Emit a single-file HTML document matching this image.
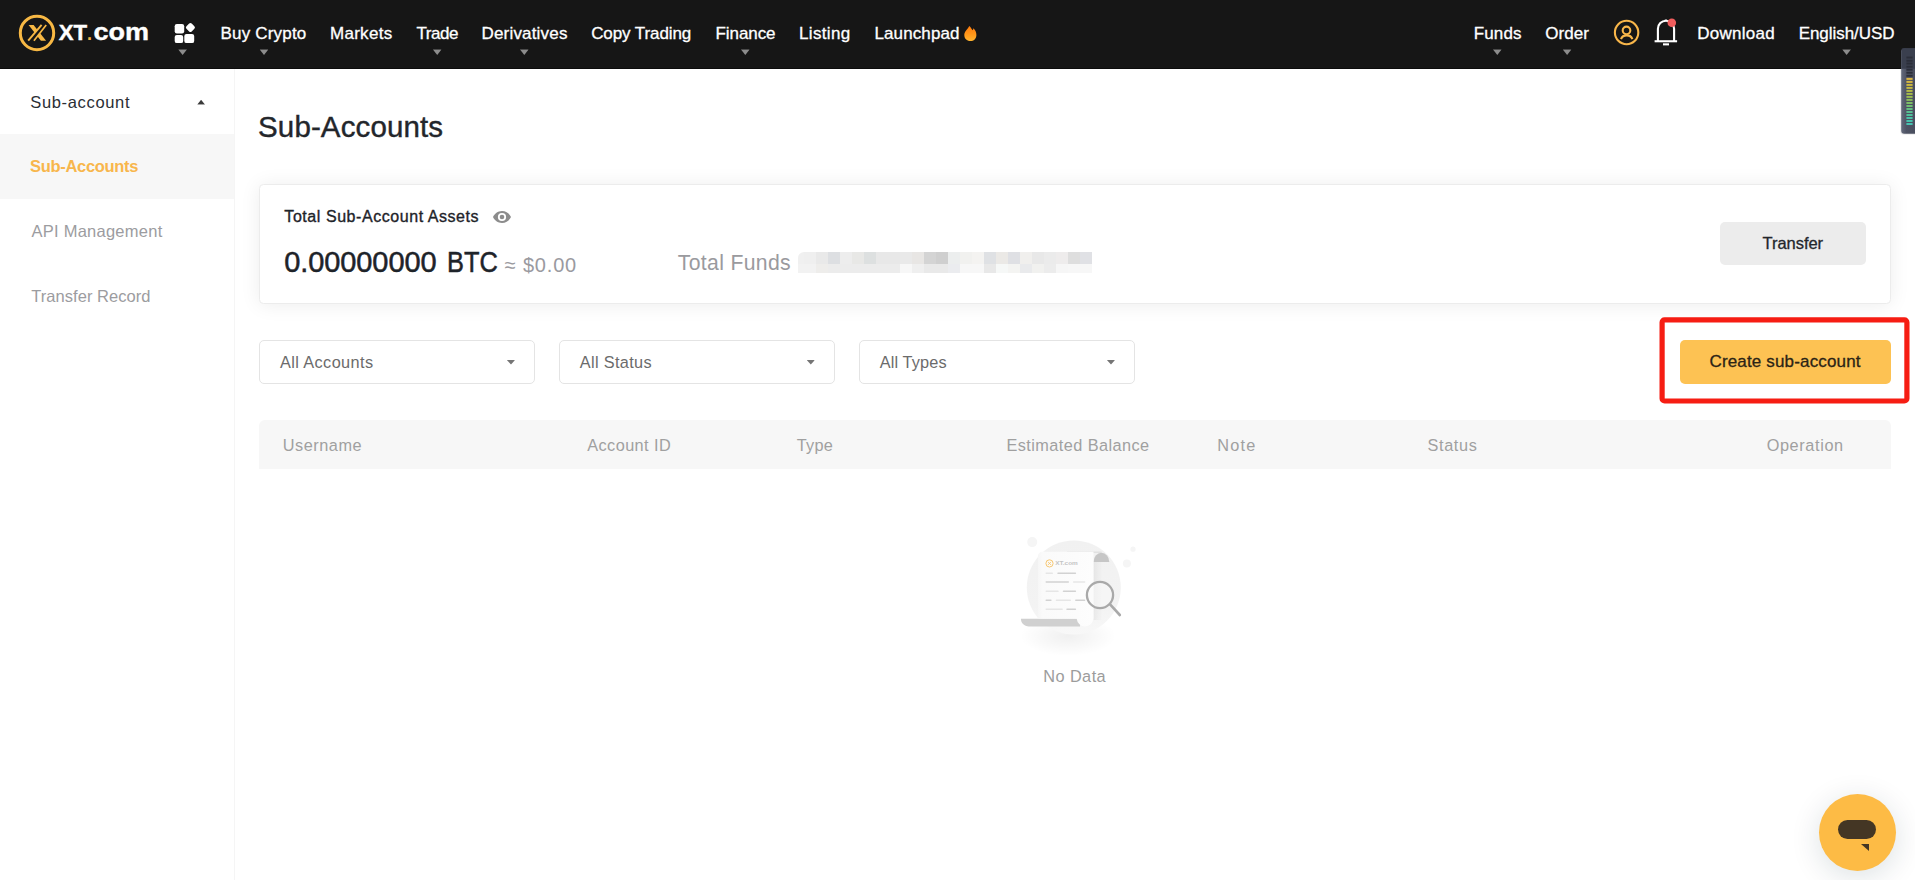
<!DOCTYPE html>
<html lang="en">
<head>
<meta charset="utf-8">
<title>Sub-Accounts</title>
<style>
*{box-sizing:border-box;margin:0;padding:0}
html,body{width:1915px;height:880px;overflow:hidden;background:#fff}
body{font-family:"Liberation Sans",sans-serif;color:#1e2329;position:relative}
.abs{position:absolute;white-space:nowrap}
#nav{position:absolute;left:0;top:0;width:1915px;height:68px;background:#161616}
#navline{position:absolute;left:0;top:68px;width:1915px;height:1px;background:#0c0c0c}
.ni{position:absolute;top:23px;height:22px;line-height:22px;font-size:17px;color:#fff;white-space:nowrap;-webkit-text-stroke:0.3px #fff}
.car{position:absolute;left:0;top:0;width:9px;height:5.800px;background:#8c8c8c;clip-path:polygon(0 0,100% 0,50% 100%)}
#side{position:absolute;left:0;top:69px;width:235px;height:812px;border-right:1px solid #f5f5f5;background:#fff}
.si{position:absolute;left:31px;font-size:16.500px;height:20px;line-height:20px;color:#9c9ca0;white-space:nowrap}
.sel{top:340px;width:275.600px;height:43.600px;border:1px solid #e4e4e4;border-radius:5px;background:#fff}
.selt{top:351px;font-size:16.300px;line-height:22px;color:#6b6b6b}
.scar{position:absolute;left:0;top:0;width:8.400px;height:4.700px;background:#757575;clip-path:polygon(0 0,100% 0,50% 100%)}
.th{top:434px;font-size:16.300px;line-height:22px;color:#a0a0a0}
</style>
</head>
<body>
<div id="nav">
  <svg class="abs" style="left:0;top:0" width="160" height="68" viewBox="0 0 160 68">
    <circle cx="37" cy="32.950" r="16.700" fill="none" stroke="#f7b844" stroke-width="3"/>
    <polygon points="28.600,24.900 33.600,24.900 46.100,40.700 40.900,40.700" fill="#f7b844"/>
    <polygon points="41.600,24.900 46.200,24.900 33.900,40.700 28.200,40.700" fill="#161616"/>
    <line x1="41.600" y1="24.900" x2="28.200" y2="40.700" stroke="#f7b844" stroke-width="1.900"/>
    <line x1="46.200" y1="24.900" x2="33.900" y2="40.700" stroke="#f7b844" stroke-width="1.700"/>
    <text y="40.300" font-family="Liberation Sans, sans-serif" font-weight="700" fill="#fff" stroke="#fff" stroke-width="0.400"><tspan x="58.800" font-size="21.400" textLength="28.400" lengthAdjust="spacingAndGlyphs">XT</tspan><tspan x="87" font-size="18" fill="#f6b744" stroke="none">.</tspan><tspan x="93.500" font-size="24.800" textLength="55.600" lengthAdjust="spacingAndGlyphs">com</tspan></text>
  </svg>
  <svg class="abs" style="left:170px;top:18px" width="30" height="30" viewBox="170 18 30 30">
    <rect x="174.700" y="24" width="9.500" height="9.400" rx="2.200" fill="#fff"/>
    <rect x="174.700" y="34.900" width="8.500" height="8.200" rx="2.200" fill="#fff"/>
    <rect x="184.300" y="33.900" width="9.900" height="9.200" rx="2.200" fill="#fff"/>
    <rect x="186.700" y="23.800" width="7.400" height="7.400" rx="1.800" fill="#fff" transform="rotate(45 190.400 27.500)"/>
  </svg>
  <div class="car" style="transform:translate(178.1px,49.200px)"></div>
  <div class="ni" id="n1" style=";left:220.51px;letter-spacing:0.192px">Buy Crypto</div><div class="car" style="transform:translate(259.5px,49.200px)"></div>
  <div class="ni" id="n2" style=";left:330.00px;letter-spacing:0.282px">Markets</div>
  <div class="ni" id="n3" style=";left:416.40px;letter-spacing:-0.404px">Trade</div><div class="car" style="transform:translate(432.7px,49.200px)"></div>
  <div class="ni" id="n4" style=";left:481.51px;letter-spacing:0.181px">Derivatives</div><div class="car" style="transform:translate(519.8px,49.200px)"></div>
  <div class="ni" id="n5" style=";left:591.13px;letter-spacing:-0.089px">Copy Trading</div>
  <div class="ni" id="n6" style=";left:715.51px;letter-spacing:-0.075px">Finance</div><div class="car" style="transform:translate(740.8px,49.200px)"></div>
  <div class="ni" id="n7" style=";left:799.00px;letter-spacing:0.341px">Listing</div>
  <div class="ni" id="n8" style=";left:874.51px;letter-spacing:0.101px">Launchpad</div>
  <svg class="abs" style="left:962px;top:24px" width="17" height="19" viewBox="0 0 17 19">
    <defs><linearGradient id="fl" x1="0" y1="0" x2="0" y2="1"><stop offset="0" stop-color="#ff7a0c"/><stop offset="0.500" stop-color="#ff9418"/><stop offset="1" stop-color="#ffb42e"/></linearGradient></defs>
    <path d="M7.300 1.900c1.500 1.500 2.500 2.800 3.100 4.400 0.500-0.500 0.900-1.200 1.100-2.100 1.800 1.800 2.900 4.200 2.900 6.700 0 3.500-2.600 6.200-6.100 6.200s-6-2.700-6-6.100c0-3.600 3.100-5.500 5-9.100z" fill="url(#fl)"/>
  </svg>
  <div class="ni" id="n9" style=";left:1473.76px;letter-spacing:0.124px">Funds</div><div class="car" style="transform:translate(1492.8px,49.200px)"></div>
  <div class="ni" id="n10" style=";left:1545.19px;letter-spacing:0.054px">Order</div><div class="car" style="transform:translate(1562.6px,49.200px)"></div>
  <svg class="abs" style="left:1610px;top:15px" width="72" height="36" viewBox="1610 15 72 36">
    <g fill="none" stroke="#f8b64a" stroke-width="2.100">
      <circle cx="1626.600" cy="32.500" r="11.700"/>
      <circle cx="1626.500" cy="30.400" r="3.800"/>
      <path d="M1621 39.200a6 5.500 0 0 1 11.400 0"/>
    </g>
    <g fill="none" stroke="#fff" stroke-width="2.100">
      <path d="M1657.900 41.200V28.800a8.100 8.100 0 0 1 16.200 0V41.200"/>
      <path d="M1654.600 41.250H1677.100"/>
      <path d="M1663 44.350H1669"/>
      <path d="M1665.900 19.600v1.500" stroke-width="2.400"/>
    </g>
    <circle cx="1671.800" cy="22.700" r="4.300" fill="#f05d5d"/>
  </svg>
  <div class="ni" id="n11" style=";left:1697.16px;letter-spacing:0.280px">Download</div>
  <div class="ni" id="n12" style=";left:1798.66px;letter-spacing:-0.042px">English/USD</div><div class="car" style="transform:translate(1842.1px,49.200px)"></div>
</div>
<div id="navline"></div>
<div id="side">
  <div class="si" style="top:23px;color:#2a2e34;left:30.23px;letter-spacing:0.665px" id="s0">Sub-account</div>
  <div class="abs" style="left:0;top:0;width:8px;height:5px;background:#3a3a3a;clip-path:polygon(50% 0,100% 100%,0 100%);transform:translate(197.100px,30.800px)"></div>
  <div class="abs" style="left:0;top:65px;width:234.300px;height:65px;background:#f7f7f7"></div>
  <div class="si" style="top:87px;color:#f8b64c;font-weight:700;left:30.12px;letter-spacing:-0.315px" id="s1">Sub-Accounts</div>
  <div class="si" style="top:152px;left:31.44px;letter-spacing:0.256px" id="s2">API Management</div>
  <div class="si" style="top:217px;left:31.21px;letter-spacing:0.053px" id="s3">Transfer Record</div>
</div>
<div id="main">
  <div class="abs" id="title" style="top:108px;font-size:29.500px;line-height:38px;color:#23262b;-webkit-text-stroke:0.400px #23262b;left:258.07px;letter-spacing:0.118px">Sub-Accounts</div>
  <div class="abs" id="card" style="left:259px;top:184px;width:1632px;height:120px;border:1px solid #ececec;border-radius:4.500px;background:#fff;box-shadow:0 1px 20px rgba(0,0,0,0.075)"></div>
  <div class="abs" id="c1" style="top:207px;font-size:16px;line-height:20px;color:#1e2329;-webkit-text-stroke:0.350px #1e2329;left:284.37px;letter-spacing:0.555px">Total Sub-Account Assets</div>
  <svg class="abs" style="left:492px;top:210px" width="20" height="14" viewBox="0 0 20 14">
    <path d="M10 1C5.800 1 2.400 3.800 1 7c1.400 3.200 4.800 6 9 6s7.600-2.800 9-6C17.600 3.800 14.200 1 10 1z" fill="#8c8c8c"/>
    <circle cx="10" cy="7" r="4.100" fill="#fff"/>
    <circle cx="10" cy="7" r="2.300" fill="#8c8c8c"/>
  </svg>
  <div class="abs" id="c2" style="top:244px;font-size:29px;line-height:36px;color:#1e2329;-webkit-text-stroke:0.500px #1e2329;left:284.30px;letter-spacing:-0.104px">0.00000000</div>
  <div class="abs" id="c2b" style="top:244px;font-size:29px;line-height:36px;color:#1e2329;-webkit-text-stroke:0.500px #1e2329;left:447.200px;letter-spacing:0px;transform:scaleX(0.876);transform-origin:0 0">BTC</div>
  <div class="abs" id="c3" style="top:250px;font-size:20px;line-height:30px;color:#9a9aa0;left:504.76px;letter-spacing:0.810px">≈ $0.00</div>
  <div class="abs" id="c4" style="top:248px;font-size:21.200px;line-height:30px;color:#9a9a9e;left:677.76px;letter-spacing:0.334px">Total Funds</div>
  <svg class="abs" id="blur" style="left:798px;top:252px" width="294" height="21" viewBox="798 252 294 21" shape-rendering="crispEdges"><defs><clipPath id="bc"><path d="M798 273V258a6 6 0 0 1 6-6H1092V273z"/></clipPath></defs><g clip-path="url(#bc)"><rect x="798" y="252" width="6" height="12" fill="#f0f0f0"/><rect x="798" y="264" width="6" height="8.600" fill="#f2f2f2"/><rect x="804" y="252" width="12" height="12" fill="#efefef"/><rect x="804" y="264" width="12" height="8.600" fill="#f2f2f2"/><rect x="816" y="252" width="12" height="12" fill="#e9e9e9"/><rect x="816" y="264" width="12" height="8.600" fill="#eeedeb"/><rect x="828" y="252" width="12" height="12" fill="#dddfe2"/><rect x="828" y="264" width="12" height="8.600" fill="#ececec"/><rect x="840" y="252" width="12" height="12" fill="#ededed"/><rect x="840" y="264" width="12" height="8.600" fill="#ececec"/><rect x="852" y="252" width="12" height="12" fill="#e8e8e6"/><rect x="852" y="264" width="12" height="8.600" fill="#ececec"/><rect x="864" y="252" width="12" height="12" fill="#dde0e0"/><rect x="864" y="264" width="12" height="8.600" fill="#ececec"/><rect x="876" y="252" width="12" height="12" fill="#e8e8e8"/><rect x="876" y="264" width="12" height="8.600" fill="#ececec"/><rect x="888" y="252" width="12" height="12" fill="#e8e8e8"/><rect x="888" y="264" width="12" height="8.600" fill="#ececec"/><rect x="900" y="252" width="12" height="12" fill="#e9e9e9"/><rect x="900" y="264" width="12" height="8.600" fill="#f7f7f7"/><rect x="912" y="252" width="12" height="12" fill="#e8e6e4"/><rect x="912" y="264" width="12" height="8.600" fill="#efefef"/><rect x="924" y="252" width="12" height="12" fill="#d4d4d4"/><rect x="924" y="264" width="12" height="8.600" fill="#e9e9e9"/><rect x="936" y="252" width="12" height="12" fill="#cfcfcf"/><rect x="936" y="264" width="12" height="8.600" fill="#e9e9e9"/><rect x="948" y="252" width="12" height="12" fill="#eceeee"/><rect x="948" y="264" width="12" height="8.600" fill="#ebecef"/><rect x="960" y="252" width="12" height="12" fill="#f1f1ef"/><rect x="960" y="264" width="12" height="8.600" fill="#f7f7f7"/><rect x="972" y="252" width="12" height="12" fill="#f4f3f1"/><rect x="972" y="264" width="12" height="8.600" fill="#f7f7f7"/><rect x="984" y="252" width="12" height="12" fill="#dfe1e4"/><rect x="984" y="264" width="12" height="8.600" fill="#e8e8e8"/><rect x="996" y="252" width="12" height="12" fill="#ebe9e6"/><rect x="996" y="264" width="12" height="8.600" fill="#f6f8f7"/><rect x="1008" y="252" width="12" height="12" fill="#dfe0e4"/><rect x="1008" y="264" width="12" height="8.600" fill="#f4f4f2"/><rect x="1020" y="252" width="12" height="12" fill="#f0efed"/><rect x="1020" y="264" width="12" height="8.600" fill="#e9eaec"/><rect x="1032" y="252" width="12" height="12" fill="#e8e8e8"/><rect x="1032" y="264" width="12" height="8.600" fill="#f1f1ef"/><rect x="1044" y="252" width="12" height="12" fill="#ebebeb"/><rect x="1044" y="264" width="12" height="8.600" fill="#ececec"/><rect x="1056" y="252" width="12" height="12" fill="#eeecec"/><rect x="1056" y="264" width="12" height="8.600" fill="#f6f6f6"/><rect x="1068" y="252" width="12" height="12" fill="#dedede"/><rect x="1068" y="264" width="12" height="8.600" fill="#f7f7f7"/><rect x="1080" y="252" width="12" height="12" fill="#e0e1e5"/><rect x="1080" y="264" width="12" height="8.600" fill="#f7f7f7"/></g></svg>
  <div class="abs" id="btnT" style="left:1720px;top:222px;width:146px;height:43px;border-radius:5px;background:#ececec"></div>
  <div class="abs" id="btnTt" style="top:232px;font-size:16.500px;line-height:22px;color:#23262b;-webkit-text-stroke:0.300px #23262b;left:1762.50px;letter-spacing:-0.034px">Transfer</div>

  <div class="abs sel" style="left:259px"></div><div class="abs selt" id="f1" style=";left:280.00px;letter-spacing:0.398px">All Accounts</div><div class="scar" style="transform:translate(506.8px,359.900px)"></div>
  <div class="abs sel" style="left:559.200px"></div><div class="abs selt" id="f2" style=";left:579.75px;letter-spacing:0.340px">All Status</div><div class="scar" style="transform:translate(806.6px,359.900px)"></div>
  <div class="abs sel" style="left:859px"></div><div class="abs selt" id="f3" style=";left:879.75px;letter-spacing:0.133px">All Types</div><div class="scar" style="transform:translate(1106.8px,359.900px)"></div>

  <div class="abs" id="btnC" style="left:1680px;top:340px;width:211px;height:44px;border-radius:5px;background:#fdc253"></div>
  <div class="abs" id="btnCt" style="top:351px;font-size:17px;line-height:22px;color:#2b2416;-webkit-text-stroke:0.300px #2b2416;left:1709.44px;letter-spacing:0.162px">Create sub-account</div>
  <svg class="abs" id="redbox" style="left:1655px;top:313px" width="260" height="95" viewBox="1655 313 260 95"><rect x="1662.100" y="319.800" width="244.800" height="81.200" rx="2.500" fill="none" stroke="#f61d13" stroke-width="5.200"/></svg>

  <div class="abs" id="thead" style="left:259px;top:420px;width:1632px;height:48.700px;background:#f7f7f7;border-radius:6px 6px 0 0"></div>
  <div class="abs th" id="h1" style=";left:282.68px;letter-spacing:0.541px">Username</div>
  <div class="abs th" id="h2" style=";left:587.27px;letter-spacing:0.417px">Account ID</div>
  <div class="abs th" id="h3" style=";left:796.76px;letter-spacing:0.293px">Type</div>
  <div class="abs th" id="h4" style=";left:1006.53px;letter-spacing:0.425px">Estimated Balance</div>
  <div class="abs th" id="h5" style=";left:1217.14px;letter-spacing:1.299px">Note</div>
  <div class="abs th" id="h6" style=";left:1427.49px;letter-spacing:0.646px">Status</div>
  <div class="abs th" id="h7" style=";left:1766.66px;letter-spacing:0.623px">Operation</div>

<svg class="abs" id="ill" style="left:1000px;top:530px" width="150" height="130" viewBox="1000 530 150 130">
    <defs>
      <linearGradient id="cg" x1="0" y1="0" x2="0" y2="1"><stop offset="0" stop-color="#f1f1f1"/><stop offset="0.700" stop-color="#f3f3f3"/><stop offset="1" stop-color="#f8f8f8"/></linearGradient>
      <radialGradient id="sh" cx="0.500" cy="0.500" r="0.500"><stop offset="0" stop-color="#000" stop-opacity="0.060"/><stop offset="1" stop-color="#000" stop-opacity="0"/></radialGradient>
      <linearGradient id="ps" x1="0" y1="0" x2="1" y2="0"><stop offset="0" stop-color="#000" stop-opacity="0.050"/><stop offset="1" stop-color="#000" stop-opacity="0"/></linearGradient>
      <linearGradient id="pg" x1="0" y1="0" x2="1" y2="0"><stop offset="0" stop-color="#f6f6f6"/><stop offset="0.080" stop-color="#fafafa"/><stop offset="1" stop-color="#fdfdfd"/></linearGradient>
    </defs>
    <ellipse cx="1068" cy="636" rx="48" ry="20" fill="url(#sh)"/>
    <circle cx="1073.800" cy="587.500" r="47" fill="url(#cg)"/>
    <circle cx="1032.200" cy="542.100" r="5" fill="#f5f5f5"/>
    <circle cx="1133" cy="549.200" r="2.600" fill="#f5f5f5"/>
    <circle cx="1126.900" cy="563.400" r="4" fill="#f5f5f5"/>
    <rect x="1093.500" y="562" width="9" height="58" fill="url(#ps)"/>
    <path d="M1093.500 561.900a7.900 9.200 0 0 1 15.800 0z" fill="#c6c6c6"/>
    <path d="M1067 552.200H1101.500" stroke="#d9d9d9" stroke-width="1" fill="none"/>
    <path d="M1020.900 618.800H1080v7.600H1029c-5 0-8.100-3.500-8.100-7.600z" fill="#d0d0d0"/>
    <path d="M1037.900 556.500a4.800 4.800 0 0 1 4.800-4.800H1093.500V618a8.400 8.400 0 0 1-8.400 8.400a8.400 8.400 0 0 1-8.400-7.600H1037.900z" fill="url(#pg)"/>
    <circle cx="1049.500" cy="563.400" r="3.600" fill="none" stroke="#f6c264" stroke-width="0.900"/>
    <path d="M1047.900 561.800l3.200 3.200M1051.100 561.800l-3.200 3.200" stroke="#f6c264" stroke-width="0.800"/>
    <text x="1055.300" y="565.300" font-family="Liberation Sans, sans-serif" font-weight="700" font-size="5.400" fill="#c4c4c4" textLength="22.500" lengthAdjust="spacingAndGlyphs">XT.com</text>
    <g stroke-width="1.500" stroke-linecap="round" fill="none">
      <path d="M1046.200 573.200H1052.300M1046.200 591.200H1058M1056.400 600.200H1070.300M1046.200 609.200H1062.100M1073.700 582H1084.600" stroke="#e6e6e6"/>
      <path d="M1058 573.200H1075.400M1046.200 582H1068.300M1063.500 591.200H1075.400M1046.200 600.200H1050.900M1075.800 600.200H1084.600M1067 609.200H1075.400" stroke="#d2d2d2"/>
    </g>
    <circle cx="1100" cy="595" r="13.100" fill="#fafafa" fill-opacity="0.500" stroke="#a9a9a9" stroke-width="2.300"/>
    <path d="M1110.300 604.600L1119.800 615" stroke="#a9a9a9" stroke-width="2.600" stroke-linecap="round"/>
  </svg>
  <div class="abs" id="nodata" style="top:666px;font-size:16.300px;line-height:20px;color:#9c9c9c;left:1043.21px;letter-spacing:0.456px">No Data</div>
</div>
<svg class="abs" id="wid" style="left:1896px;top:44px" width="19" height="94" viewBox="1896 44 19 94">
  <defs><linearGradient id="wg" x1="0" y1="0" x2="1" y2="0"><stop offset="0" stop-color="#646a7c"/><stop offset="0.250" stop-color="#4e5364"/><stop offset="1" stop-color="#464b5a"/></linearGradient></defs>
  <rect x="1900.300" y="48.700" width="20" height="86" rx="3.500" fill="#000" fill-opacity="0.080"/>
  <rect x="1901.200" y="48.500" width="20" height="85.300" rx="3" fill="url(#wg)"/>
  <rect x="1901.800" y="48.500" width="20" height="20" fill="#3a3f4e"/>
  <path d="M1901.800 68.500V51.500a3 3 0 0 1 3-3H1915V68.500z" fill="#3a3f4e"/>
  <rect x="1906.400" y="56.6" width="6.200" height="1.900" fill="#2b2e39"/><rect x="1906.400" y="59.8" width="6.200" height="1.900" fill="#2b2e39"/><rect x="1906.400" y="62.6" width="6.200" height="1.900" fill="#2b2e39"/><rect x="1906.400" y="65.8" width="6.200" height="1.900" fill="#2b2e39"/><rect x="1906.400" y="68.8" width="6.200" height="1.900" fill="#2b2e39"/><rect x="1906.400" y="71.8" width="6.200" height="1.900" fill="#2b2e39"/><rect x="1906.400" y="74.8" width="6.200" height="1.900" fill="#2b2e39"/><rect x="1906.400" y="77.9" width="6.200" height="2" fill="#d9b441"/><rect x="1906.400" y="80.9" width="6.200" height="2" fill="#d6b640"/><rect x="1906.400" y="83.9" width="6.200" height="2" fill="#cdb83f"/><rect x="1906.400" y="86.9" width="6.200" height="2" fill="#c2b941"/><rect x="1906.400" y="89.9" width="6.200" height="2" fill="#b4ba45"/><rect x="1906.400" y="92.9" width="6.200" height="2" fill="#a6bb4b"/><rect x="1906.400" y="95.9" width="6.200" height="2" fill="#98bc52"/><rect x="1906.400" y="98.9" width="6.200" height="2" fill="#8bbd5a"/><rect x="1906.400" y="102.0" width="6.200" height="2" fill="#7dbd66"/><rect x="1906.400" y="105.0" width="6.200" height="2" fill="#70bd73"/><rect x="1906.400" y="108.0" width="6.200" height="2" fill="#63be82"/><rect x="1906.400" y="111.0" width="6.200" height="2" fill="#58be90"/><rect x="1906.400" y="114.0" width="6.200" height="2" fill="#4fbf9b"/><rect x="1906.400" y="117.0" width="6.200" height="2" fill="#49c0a5"/><rect x="1906.400" y="120.0" width="6.200" height="2" fill="#45c0ab"/><rect x="1906.400" y="123.0" width="6.200" height="2" fill="#47c2b0"/>
</svg>
<div class="abs" id="chat" style="left:1819px;top:794px;width:77px;height:77px;border-radius:50%;background:#fdbb45;box-shadow:0 6px 30px rgba(0,40,60,0.140)"></div>
<div class="abs" style="left:1838px;top:820.300px;width:38px;height:19px;border-radius:10px;background:#443624"></div>
<div class="abs" style="left:1861px;top:843.500px;width:0;height:0;border-top:7px solid #443624;border-left:8px solid transparent"></div>
</body>
</html>
